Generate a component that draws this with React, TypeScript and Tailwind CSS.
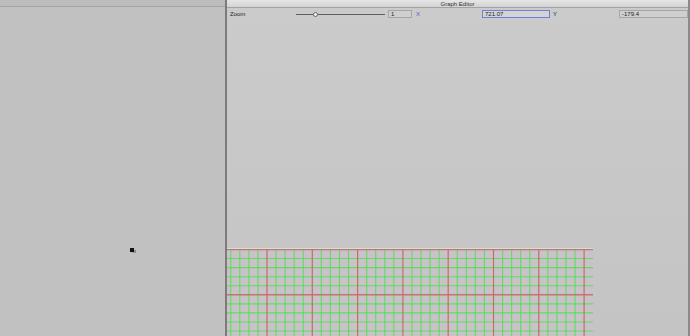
import React from 'react';

const font = { fontFamily: '"Liberation Sans", Arial, sans-serif' };

// minor step ~9.06px, major every 5 minor
const STEP = 45.3 / 5;

function Grid() {
  const w = 366;
  const h = 88;
  const vLines: { x: number; major: boolean }[] = [];
  for (let k = -4; 40 + k * STEP < w; k++) {
    const x = 40 + k * STEP;
    if (x < 0) continue;
    vLines.push({ x, major: ((k % 5) + 5) % 5 === 0 });
  }
  const hLines: { y: number; major: boolean }[] = [];
  for (let k = 0; 1 + k * STEP < h; k++) {
    hLines.push({ y: 1.5 + k * STEP, major: k % 5 === 0 });
  }
  return (
    <svg width={w} height={h} className="block">
      <rect x={0} y={0} width={w} height={h} fill="#c9c2c9" />
      {vLines.filter(l => !l.major).map((l, i) => (
        <line key={'vg' + i} x1={l.x} y1={0} x2={l.x} y2={h} stroke="#4ee24e" strokeOpacity={0.85} strokeWidth={1.1} />
      ))}
      {hLines.filter(l => !l.major).map((l, i) => (
        <line key={'hg' + i} x1={0} y1={l.y} x2={w} y2={l.y} stroke="#4ee24e" strokeOpacity={0.85} strokeWidth={1.1} />
      ))}
      {vLines.filter(l => l.major).map((l, i) => (
        <line key={'vr' + i} x1={l.x} y1={0} x2={l.x} y2={h} stroke="#c0705f" strokeWidth={1.2} />
      ))}
      {hLines.filter(l => l.major).map((l, i) => (
        <line key={'hr' + i} x1={0} y1={l.y} x2={w} y2={l.y} stroke="#c0705f" strokeOpacity={0.9} strokeWidth={1.6} />
      ))}
      <line x1={0} y1={0.5} x2={w} y2={0.5} stroke="#d2dde2" strokeWidth={1} />
    </svg>
  );
}

function Field({ value, width, focused }: { value: string; width: string; focused?: boolean }) {
  return (
    <div
      className={`${width} h-[8px] flex items-center pl-[2px] text-[6px] leading-none text-[#222] ${
        focused ? 'border border-[#6f80d6] bg-[#d4d4d4]' : 'border border-[#a6a6a6] bg-[#cfcfcf]'
      }`}
    >
      {value}
    </div>
  );
}

export default function App() {
  return (
    <div className="w-[690px] h-[336px] flex overflow-hidden bg-[#c2c2c2]" style={font}>
      {/* left panel */}
      <div className="w-[225px] h-full flex flex-col">
        <div className="h-[6px] bg-[#bcbcbc]" />
        <div className="h-[1px] bg-[#a4a4a4]" />
        <div className="flex-1 bg-[#c1c1c1] pt-[241px] pl-[130px]">
          <svg width="7" height="6" className="block">
            <rect x="0" y="0" width="4" height="4" fill="#111" />
            <rect x="4" y="2" width="2" height="3" fill="#8a8a8a" />
            <rect x="2" y="4" width="3" height="1" fill="#9a9a9a" />
          </svg>
        </div>
      </div>

      {/* divider */}
      <div className="w-[2px] h-full bg-[#7c7c7c]" />

      {/* right panel */}
      <div className="w-[461px] h-full flex flex-col bg-gradient-to-b from-[#cbcbcb] to-[#c4c4c4]">
        <div className="h-[7px] bg-gradient-to-b from-[#e6e6e6] to-[#d3d3d3] flex items-center justify-center text-[6px] leading-none text-[#333]">
          Graph Editor
        </div>
        <div className="h-[1px] bg-[#a2a2a2]" />
        <div className="h-[12px] flex items-center pl-[3px] text-[6px] leading-none text-[#222]">
          <div className="w-[66px]">Zoom</div>
          <div className="w-[89px] h-[5px] relative flex items-center">
            <div className="w-full h-[1px] bg-[#5e5e5e]" />
            <div className="absolute left-[17px] top-0 w-[5px] h-[5px] rounded-full bg-[#eeeeee] border border-[#6a6a6a]" />
          </div>
          <div className="w-[3px]" />
          <Field value="1" width="w-[24px]" />
          <div className="w-[4px]" />
          <div className="w-[66px] text-[#4a63d8]">X</div>
          <Field value="721.07" width="w-[68px]" focused />
          <div className="w-[3px]" />
          <div className="w-[66px]">Y</div>
          <Field value="-179.4" width="w-[69px]" />
        </div>
        <div className="flex-1" />
        <div className="flex">
          <Grid />
        </div>
      </div>

      <div className="w-[2px] h-full bg-[#8a8a8a]" />
    </div>
  );
}
